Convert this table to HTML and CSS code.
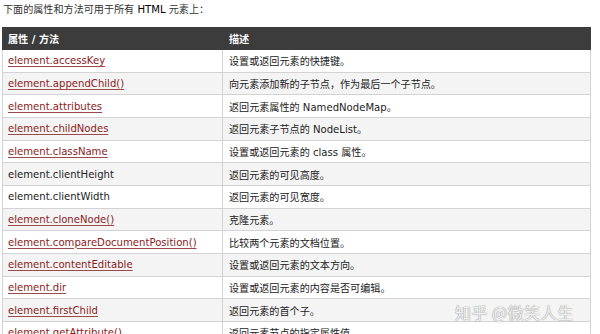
FILE: index.html
```html
<!DOCTYPE html>
<html lang="zh-CN">
<head>
<meta charset="utf-8">
<title>HTML DOM 元素对象</title>
<link rel="stylesheet" href="styles.css">
</head>
<body>
<div class="page">
  <p class="intro">下面的属性和方法可用于所有 <b>HTML</b> 元素上：</p>
  <table class="ref">
    <thead>
      <tr><th class="c1">属性 / 方法</th><th>描述</th></tr>
    </thead>
    <tbody>
      <tr><td><a href="#">element.accessKey</a></td><td>设置或返回元素的快捷键。</td></tr>
      <tr><td><a href="#">element.appendChild()</a></td><td>向元素添加新的子节点，作为最后一个子节点。</td></tr>
      <tr><td><a href="#">element.attributes</a></td><td>返回元素属性的 NamedNodeMap。</td></tr>
      <tr><td><a href="#">element.childNodes</a></td><td>返回元素子节点的 NodeList。</td></tr>
      <tr><td><a href="#">element.className</a></td><td>设置或返回元素的 class 属性。</td></tr>
      <tr><td>element.clientHeight</td><td>返回元素的可见高度。</td></tr>
      <tr><td>element.clientWidth</td><td>返回元素的可见宽度。</td></tr>
      <tr><td><a href="#">element.cloneNode()</a></td><td>克隆元素。</td></tr>
      <tr><td><a href="#">element.compareDocumentPosition()</a></td><td>比较两个元素的文档位置。</td></tr>
      <tr><td><a href="#">element.contentEditable</a></td><td>设置或返回元素的文本方向。</td></tr>
      <tr><td><a href="#">element.dir</a></td><td>设置或返回元素的内容是否可编辑。</td></tr>
      <tr><td><a href="#">element.firstChild</a></td><td>返回元素的首个子。</td></tr>
      <tr><td><a href="#">element.getAttribute()</a></td><td>返回元素节点的指定属性值。</td></tr>
    </tbody>
  </table>
  <div class="watermark">知乎 @微笑人生</div>
</div>
</body>
</html>
```
FILE: styles.css
```css
html, body {
  margin: 0;
  padding: 0;
  background: #fff;
}
body {
  font-family: "DejaVu Sans", "Noto Sans CJK SC", sans-serif;
  font-size: 10.1px;
  color: #222;
  overflow: hidden;
  height: 334px;
}
.page {
  position: relative;
  padding: 0 0 0 2px;
}
.intro {
  margin: 0;
  padding: 3px 0 0 1px;
  height: 24px;
  line-height: 13px;
  box-sizing: border-box;
  color: #333;
}
.intro b {
  font-weight: normal;
  color: #000;
}
.ref {
  border-collapse: collapse;
  width: 589px;
  table-layout: fixed;
  margin-top: 3px;
}
.ref th {
  background: #3c3c3c;
  color: #fff;
  font-weight: bold;
  text-align: left;
  height: 22px;
  padding: 0 6px;
  border: 1px solid #3c3c3c;
  box-sizing: border-box;
}
.ref th.c1 {
  width: 220px;
  padding-left: 5px;
}
.ref td {
  height: 22.67px;
  padding: 0 6px;
  border: 1px solid #d3d3d3;
  box-sizing: border-box;
  color: #222;
  white-space: nowrap;
}
.ref td:first-child {
  padding-left: 5px;
}
.ref tbody tr:nth-child(even) td {
  background: #f4f4f4;
}
.ref a {
  color: #8c1a1a;
  text-decoration: underline;
  text-decoration-color: #9a4a4a;
  text-underline-offset: 2px;
}
.watermark {
  position: absolute;
  left: 455px;
  top: 300px;
  font-family: "Noto Sans CJK SC", sans-serif;
  font-size: 16px;
  letter-spacing: 0.5px;
  color: rgba(255, 255, 255, 0.85);
  text-shadow: 0 0 1px #9a9a9a, 0 0 1px #9a9a9a;
}
```
